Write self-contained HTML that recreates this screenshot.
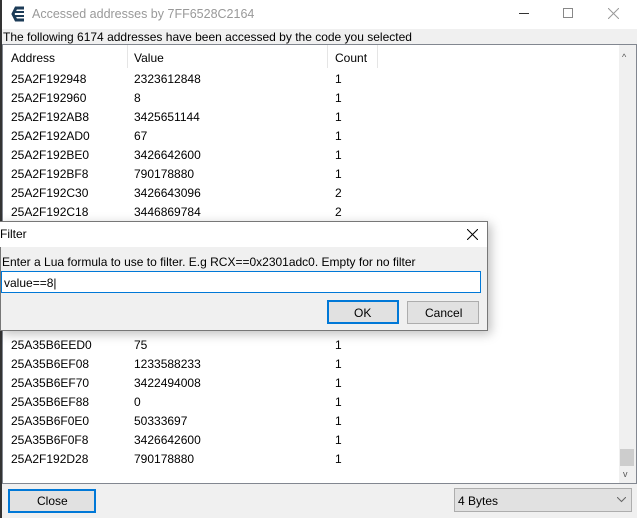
<!DOCTYPE html>
<html><head><style>
*{margin:0;padding:0;box-sizing:border-box}
body{width:637px;height:518px;overflow:hidden;background:#f0f0f0;font-family:"Liberation Sans",sans-serif;font-size:12px;color:#000;position:relative}
.a{position:absolute}
.t{position:absolute;white-space:nowrap;line-height:14px}
</style></head><body>
<div class="a" style="left:0;top:0;width:637px;height:29px;background:#fff"></div>
<div class="a" style="left:0;top:0;width:2px;height:518px;background:#333"></div>
<svg class="a" style="left:10px;top:5px" width="18" height="18" viewBox="0 0 18 18"><path d="M14 3 L6 3 L3 9 L6 15 L14 15" fill="none" stroke="#1c3b57" stroke-width="3"/><path d="M5 7h9M5 11h9" stroke="#1c3b57" stroke-width="2"/></svg>
<div class="t" style="left:32px;top:7px;color:#999;font-size:12.5px">Accessed addresses by 7FF6528C2164</div>
<div class="a" style="left:519px;top:13px;width:10px;height:1px;background:#333"></div>
<div class="a" style="left:563px;top:8px;width:10px;height:10px;border:1px solid #888"></div>
<svg class="a" style="left:608px;top:8px" width="11" height="11"><path d="M0 0L11 11M11 0L0 11" stroke="#999"/></svg>
<div class="t" style="left:3px;top:30px;color:#000">The following 6174 addresses have been accessed by the code you selected</div>
<div class="a" style="left:2px;top:44px;width:635px;height:440px;background:#fff;border:1px solid #828790"></div>
<div class="a" style="left:3px;top:45px;width:616px;height:23px;background:#fff"></div>
<div class="a" style="left:127px;top:45px;width:1px;height:23px;background:#e5e5e5"></div>
<div class="a" style="left:327px;top:45px;width:1px;height:23px;background:#e5e5e5"></div>
<div class="a" style="left:377px;top:45px;width:1px;height:23px;background:#e5e5e5"></div>
<div class="t" style="left:11px;top:51px">Address</div>
<div class="t" style="left:134px;top:51px">Value</div>
<div class="t" style="left:335px;top:51px">Count</div>
<div class="a" style="left:619px;top:45px;width:17px;height:438px;background:#f0f0f0"></div>
<div class="t" style="left:622px;top:50px;font-size:9px;color:#555">^</div>
<div class="a" style="left:620px;top:449px;width:14px;height:17px;background:#cdcdcd"></div>
<div class="t" style="left:623px;top:467px;font-size:9px;color:#555">v</div>
<div id="rows"></div>
<div class="t" style="left:11px;top:72px">25A2F192948</div><div class="t" style="left:134px;top:72px">2323612848</div><div class="t" style="left:335px;top:72px">1</div>
<div class="t" style="left:11px;top:91px">25A2F192960</div><div class="t" style="left:134px;top:91px">8</div><div class="t" style="left:335px;top:91px">1</div>
<div class="t" style="left:11px;top:110px">25A2F192AB8</div><div class="t" style="left:134px;top:110px">3425651144</div><div class="t" style="left:335px;top:110px">1</div>
<div class="t" style="left:11px;top:129px">25A2F192AD0</div><div class="t" style="left:134px;top:129px">67</div><div class="t" style="left:335px;top:129px">1</div>
<div class="t" style="left:11px;top:148px">25A2F192BE0</div><div class="t" style="left:134px;top:148px">3426642600</div><div class="t" style="left:335px;top:148px">1</div>
<div class="t" style="left:11px;top:167px">25A2F192BF8</div><div class="t" style="left:134px;top:167px">790178880</div><div class="t" style="left:335px;top:167px">1</div>
<div class="t" style="left:11px;top:186px">25A2F192C30</div><div class="t" style="left:134px;top:186px">3426643096</div><div class="t" style="left:335px;top:186px">2</div>
<div class="t" style="left:11px;top:205px">25A2F192C18</div><div class="t" style="left:134px;top:205px">3446869784</div><div class="t" style="left:335px;top:205px">2</div>
<div class="t" style="left:11px;top:338px">25A35B6EED0</div><div class="t" style="left:134px;top:338px">75</div><div class="t" style="left:335px;top:338px">1</div>
<div class="t" style="left:11px;top:357px">25A35B6EF08</div><div class="t" style="left:134px;top:357px">1233588233</div><div class="t" style="left:335px;top:357px">1</div>
<div class="t" style="left:11px;top:376px">25A35B6EF70</div><div class="t" style="left:134px;top:376px">3422494008</div><div class="t" style="left:335px;top:376px">1</div>
<div class="t" style="left:11px;top:395px">25A35B6EF88</div><div class="t" style="left:134px;top:395px">0</div><div class="t" style="left:335px;top:395px">1</div>
<div class="t" style="left:11px;top:414px">25A35B6F0E0</div><div class="t" style="left:134px;top:414px">50333697</div><div class="t" style="left:335px;top:414px">1</div>
<div class="t" style="left:11px;top:433px">25A35B6F0F8</div><div class="t" style="left:134px;top:433px">3426642600</div><div class="t" style="left:335px;top:433px">1</div>
<div class="t" style="left:11px;top:452px">25A2F192D28</div><div class="t" style="left:134px;top:452px">790178880</div><div class="t" style="left:335px;top:452px">1</div>
<div class="a" style="left:8px;top:489px;width:88px;height:24px;background:#e1e1e1;border:2px solid #0078d7"></div>
<div class="t" style="left:37px;top:494px">Close</div>
<div class="a" style="left:454px;top:488px;width:178px;height:24px;background:#e1e1e1;border:1px solid #adadad"></div>
<div class="t" style="left:458px;top:494px">4 Bytes</div>
<svg class="a" style="left:617px;top:497px" width="9" height="6"><path d="M0 0L4.5 4.5L9 0" fill="none" stroke="#666"/></svg>
<div class="a" style="left:0;top:221px;width:488px;height:110px;background:#f0f0f0;border:1px solid #777;box-shadow:3px 3px 10px rgba(0,0,0,.25)"></div>
<div class="a" style="left:0;top:222px;width:487px;height:25px;background:#fff"></div>
<div class="t" style="left:0;top:227px">Filter</div>
<svg class="a" style="left:467px;top:229px" width="11" height="11"><path d="M0 0L11 11M11 0L0 11" stroke="#000"/></svg>
<div class="t" style="left:2px;top:255px">Enter a Lua formula to use to filter. E.g RCX==0x2301adc0.  Empty for no filter</div>
<div class="a" style="left:1px;top:271px;width:480px;height:22px;background:#fff;border:1px solid #0078d7"></div>
<div class="t" style="left:4px;top:276px">value==8|</div>
<div class="a" style="left:327px;top:300px;width:72px;height:24px;background:#e1e1e1;border:2px solid #0078d7"></div>
<div class="t" style="left:354px;top:306px">OK</div>
<div class="a" style="left:407px;top:301px;width:72px;height:23px;background:#e1e1e1;border:1px solid #adadad"></div>
<div class="t" style="left:425px;top:306px">Cancel</div>
</body></html>
